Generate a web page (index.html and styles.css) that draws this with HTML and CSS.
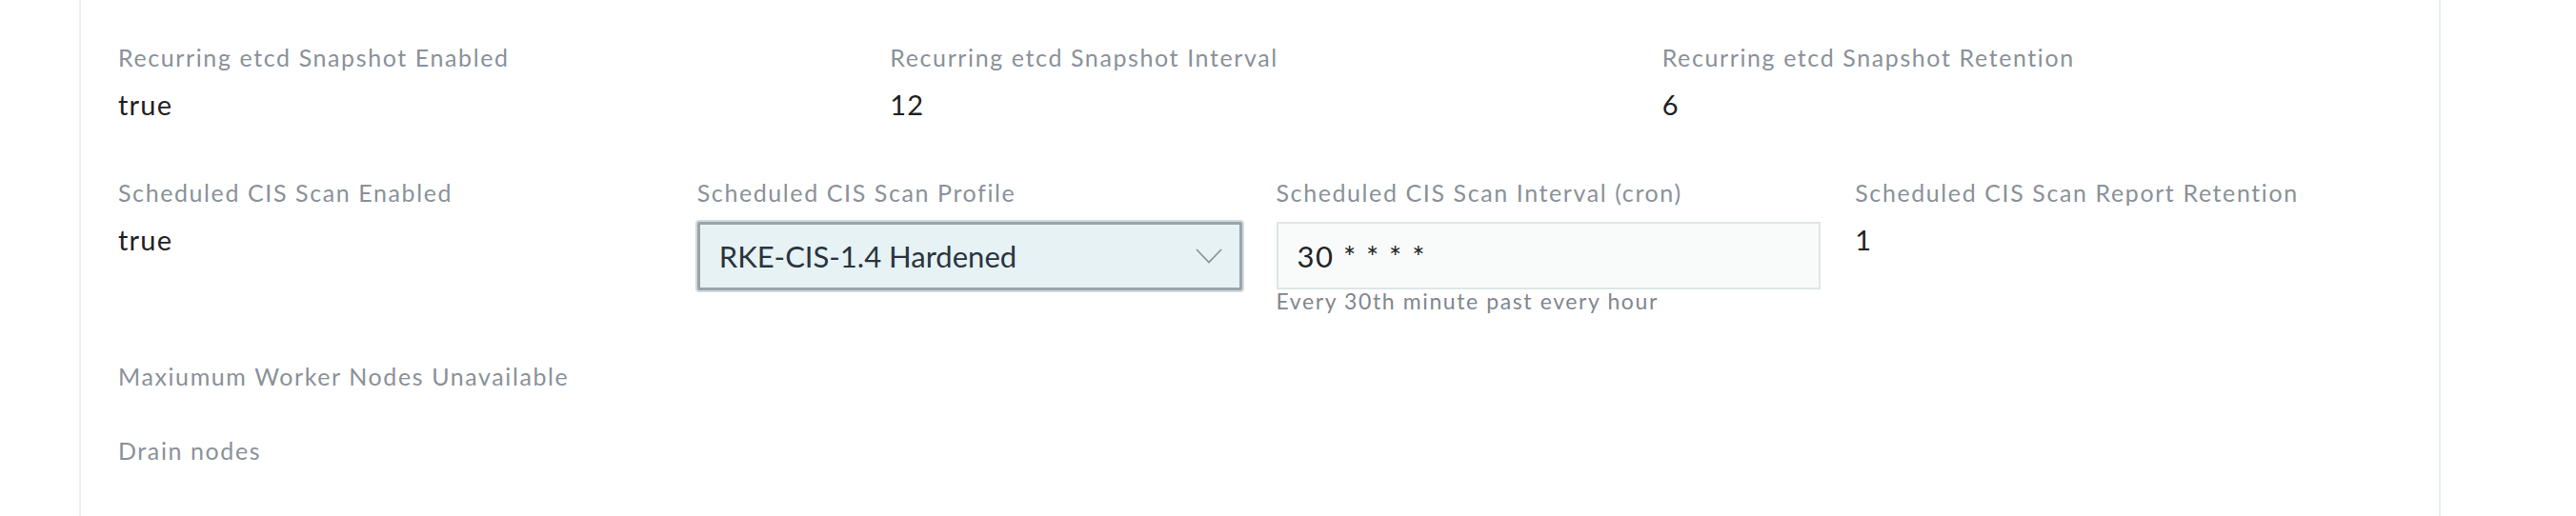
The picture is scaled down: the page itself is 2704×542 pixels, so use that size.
FILE: index.html
```html
<!DOCTYPE html>
<html lang="en">
<head>
<meta charset="utf-8">
<title>Cluster options</title>
<link rel="stylesheet" href="styles.css">
</head>
<body>
<div class="panel">
  <div class="row cols-3">
    <div class="field">
      <div class="label">Recurring etcd Snapshot Enabled</div>
      <div class="value">true</div>
    </div>
    <div class="field">
      <div class="label">Recurring etcd Snapshot Interval</div>
      <div class="value">12</div>
    </div>
    <div class="field">
      <div class="label">Recurring etcd Snapshot Retention</div>
      <div class="value">6</div>
    </div>
  </div>

  <div class="row cols-4">
    <div class="field">
      <div class="label">Scheduled CIS Scan Enabled</div>
      <div class="value">true</div>
    </div>
    <div class="field">
      <div class="label">Scheduled CIS Scan Profile</div>
      <div class="select">
        <span class="select-text">RKE-CIS-1.4 Hardened</span>
        <svg class="chevron" viewBox="0 0 28 16" width="28" height="16" aria-hidden="true">
          <path d="M1 1 L14 14.5 L27 1" fill="none" stroke="#8d959b" stroke-width="1.8"/>
        </svg>
      </div>
    </div>
    <div class="field">
      <div class="label">Scheduled CIS Scan Interval (cron)</div>
      <div class="input">30 * * * *</div>
      <div class="hint">Every 30th minute past every hour</div>
    </div>
    <div class="field">
      <div class="label">Scheduled CIS Scan Report Retention</div>
      <div class="value">1</div>
    </div>
  </div>

  <div class="row single">
    <div class="label">Maxiumum Worker Nodes Unavailable</div>
  </div>
  <div class="row single drain">
    <div class="label">Drain nodes</div>
  </div>
</div>
</body>
</html>
```

FILE: styles.css
```css
html, body {
  margin: 0;
  padding: 0;
  background: #ffffff;
  height: 542px;
  overflow: hidden;
}

body {
  font-family: Lato, "Open Sans", "Liberation Sans", sans-serif;
  color: #222426;
}

.panel {
  margin-left: 83px;
  width: 2479px;
  height: 542px;
  border-left: 2px solid #eceff0;
  border-right: 2px solid #e8eeef;
  padding: 44px 41px 0 39px;
  box-sizing: border-box;
}

.row {
  display: grid;
  column-gap: 36px;
}

.cols-3 {
  grid-template-columns: repeat(3, 1fr);
}

.cols-4 {
  grid-template-columns: repeat(4, 1fr);
  margin-top: 56px;
  align-items: start;
}

.single {
  margin-top: 51px;
}

.drain {
  margin-top: 46px;
}

.label {
  font-size: 25px;
  line-height: 32px;
  letter-spacing: 1.6px;
  color: #8a9199;
  white-space: nowrap;
}

.value {
  margin-top: 14px;
  font-size: 29px;
  line-height: 40px;
  letter-spacing: 1.2px;
  color: #1f2123;
}

.select {
  margin-top: 15px;
  height: 72px;
  box-sizing: border-box;
  background: #e7f2f4;
  border: 3px solid #98a5aa;
  box-shadow: 0 0 0 2px #d3dadc;
  border-radius: 2px;
  display: flex;
  align-items: center;
  justify-content: space-between;
  padding: 0 18px 0 20px;
}

.select-text {
  font-size: 31px;
  color: #2a3440;
}

.chevron {
  display: block;
}

.input {
  margin-top: 15px;
  height: 71px;
  box-sizing: border-box;
  background: #f9fbfb;
  border: 2px solid #dfe5e7;
  display: flex;
  align-items: center;
  padding: 0 20px;
  font-size: 31px;
  letter-spacing: 1.5px;
  color: #222426;
}

.hint {
  font-size: 23px;
  line-height: 24px;
  letter-spacing: 1.6px;
  color: #80878f;
}
```
